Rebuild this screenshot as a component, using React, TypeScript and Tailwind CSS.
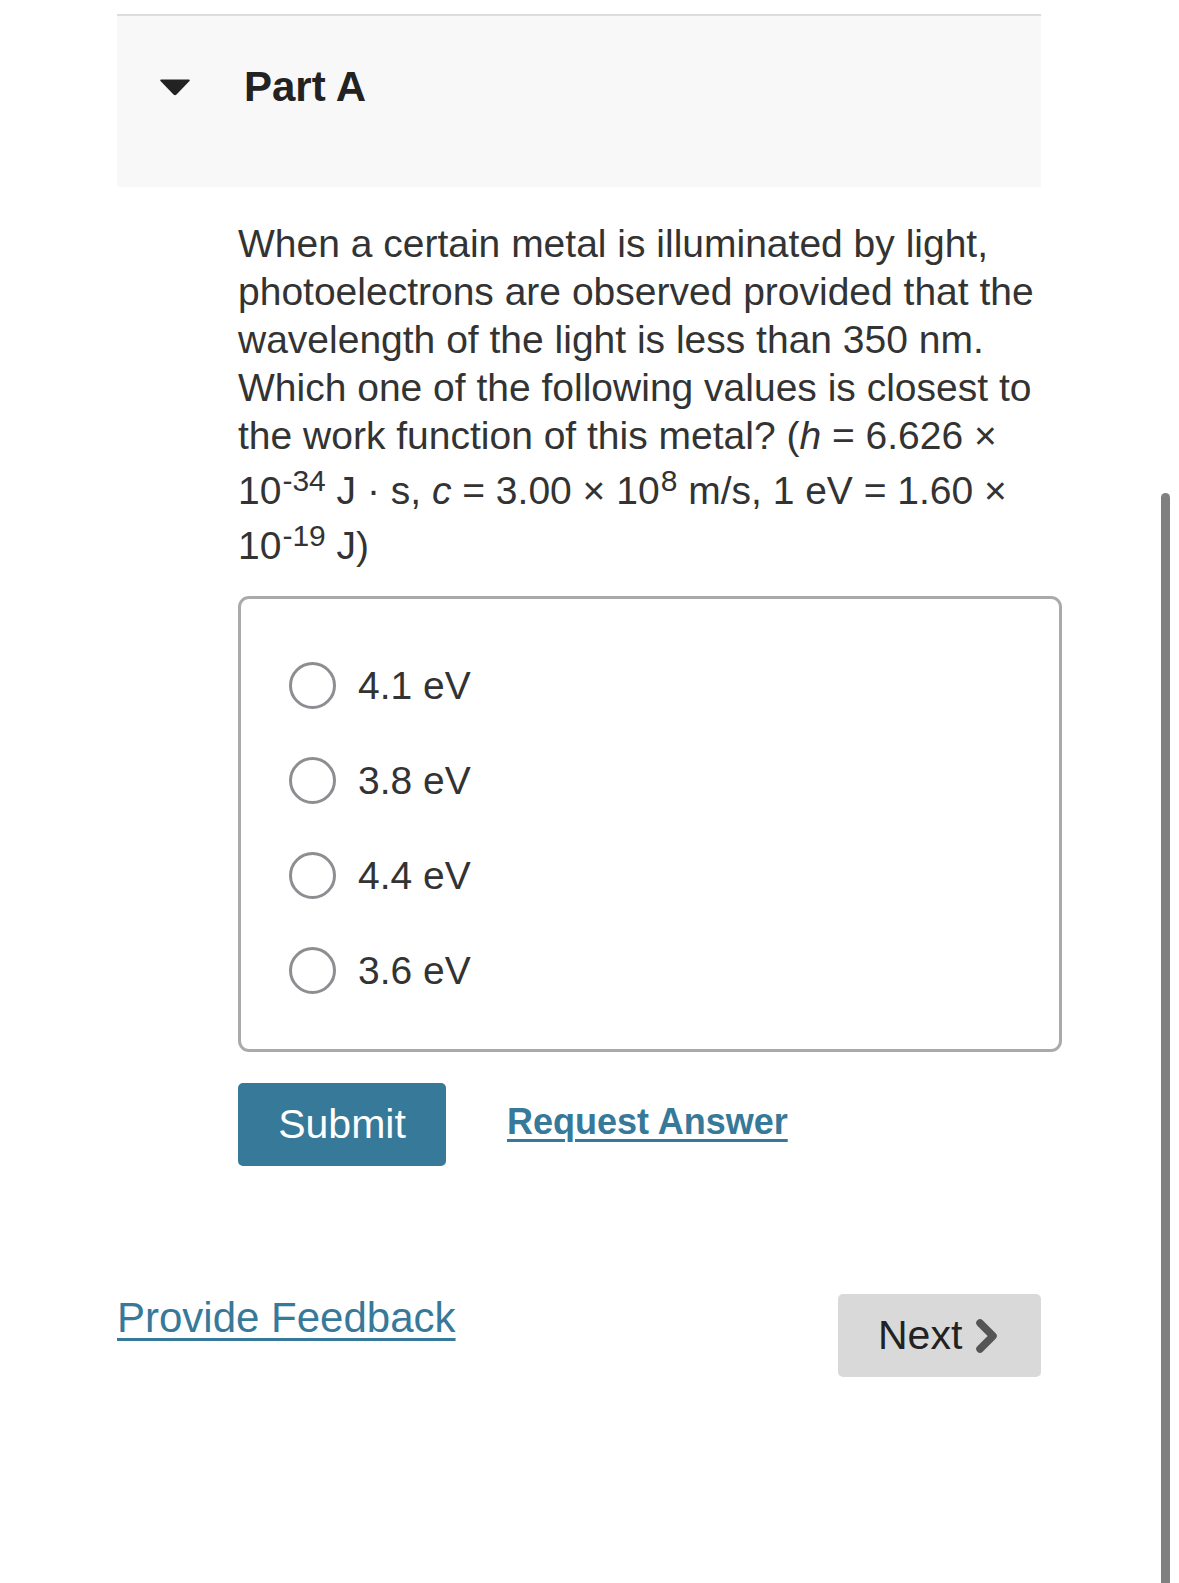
import React from "react";

const options = ["4.1 eV", "3.8 eV", "4.4 eV", "3.6 eV"];

function Radio() {
  return (
    <span className="block w-[47px] h-[47px] rounded-full border-[3px] border-[#8e8e92] bg-white shrink-0" />
  );
}

// power of ten kept on one line, with a raised exponent
function Pow({ exp }: { exp: string }) {
  return (
    <span className="whitespace-nowrap">
      10<span className="align-[13px] text-[30px] leading-[42px] ml-[1px]">{exp}</span>
    </span>
  );
}

export default function App() {
  return (
    <div className="relative min-h-[1583px] bg-white font-['Liberation_Sans',Arial,sans-serif] text-[#333333] overflow-hidden">
      <div className="ml-[117px] w-[924px] pt-[14px]">
        {/* Part header */}
        <div className="h-[173px] border-t-2 border-[#dddddd] bg-[#f8f8f8] pl-[42px] pt-[47px]">
          <div className="flex items-center h-[48px] gap-[53px]">
            <svg width="32" height="18" viewBox="0 0 32 18" className="shrink-0">
              <path d="M2 1.5 H30 Q31.5 1.5 30.5 3 L17.5 16.5 Q16 18 14.5 16.5 L1.5 3 Q0.5 1.5 2 1.5 Z" fill="#222222" />
            </svg>
            <h2 className="text-[42px] leading-[48px] font-bold text-[#222222]">Part A</h2>
          </div>
        </div>

        {/* Question */}
        <div className="pl-[121px]">
          <p className="mt-[33px] w-[824px] text-[39px] leading-[48px]">
            When a certain metal is illuminated by light, photoelectrons are observed provided that the
            wavelength of the light is less than 350 nm. Which one of the following values is closest to
            the work function of this metal? (<i>h</i> = 6.626 × <Pow exp="-34" /> J · s, <i>c</i> = 3.00 ×{" "}
            <Pow exp="8" /> m/s, 1 eV = 1.60 × <Pow exp="-19" /> J)
          </p>

          <div className="mt-[26px] w-[824px] rounded-[11px] border-[3px] border-[#aaaaaa] pl-[48px] pt-[39px] pb-[31px]">
            {options.map((o) => (
              <label key={o} className="flex items-center gap-[22px] h-[95px]">
                <Radio />
                <span className="text-[39px] leading-[48px]">{o}</span>
              </label>
            ))}
          </div>

          <div className="mt-[31px] flex items-center gap-[61px]">
            <button className="w-[208px] h-[83px] rounded-[5px] bg-[#377999] text-white text-[41px]">
              Submit
            </button>
            <a className="text-[36px] font-bold text-[#377999] underline underline-offset-[5px] decoration-[3px] -mt-[6px]">
              Request Answer
            </a>
          </div>
        </div>

        {/* Footer */}
        <div className="mt-[128px] flex items-start justify-between">
          <a className="text-[42px] leading-[48px] text-[#377999] underline underline-offset-[6px] decoration-[3px]">
            Provide Feedback
          </a>
          <button className="w-[203px] h-[83px] rounded-[5px] bg-[#d9d9d9] flex items-center pl-[40px] gap-[12px] text-[41px] text-[#222222]">
            Next
            <svg width="26" height="36" viewBox="0 0 26 36">
              <path d="M6 5 L19 18 L6 31" fill="none" stroke="#555555" strokeWidth="7.5" strokeLinecap="round" strokeLinejoin="round" />
            </svg>
          </button>
        </div>
      </div>

      {/* scrollbar */}
      <div className="absolute left-[1161px] top-[493px] w-[9px] h-[1100px] rounded-t-full bg-[#808080]" />
    </div>
  );
}
